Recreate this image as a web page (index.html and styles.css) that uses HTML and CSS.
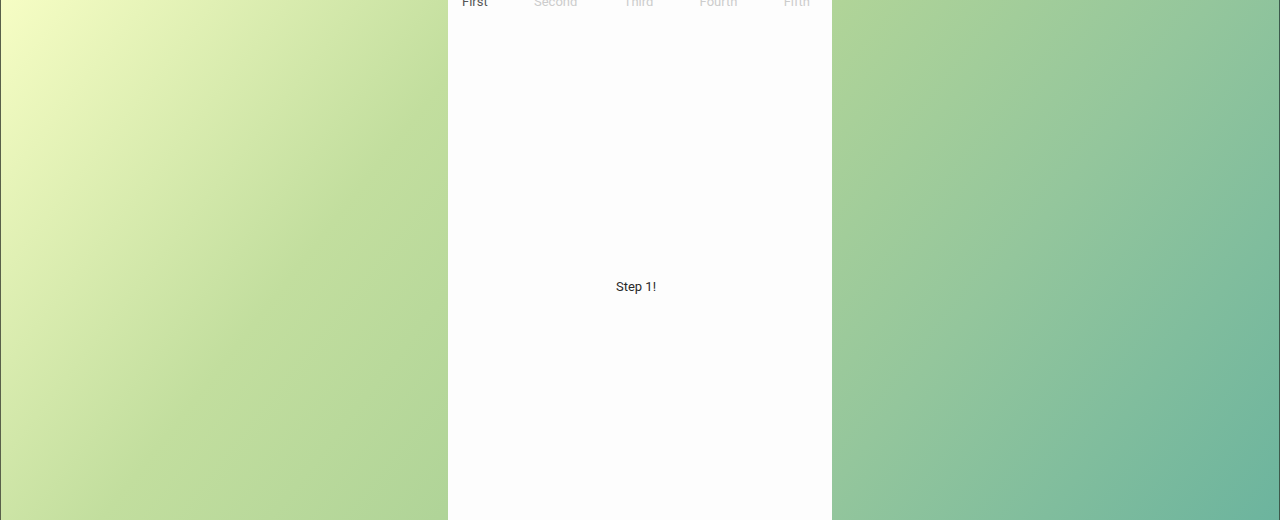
FILE: index.html
```html
<!DOCTYPE html>
<html>
<head>
<meta charset="utf-8">
<link rel="stylesheet" href="styles.css">
</head>
<body>
<div class="page">
  <div class="panel">
    <div class="inner">
      <div class="tabs">
        <span class="tab active">First</span>
        <span class="tab">Second</span>
        <span class="tab">Third</span>
        <span class="tab">Fourth</span>
        <span class="tab">Fifth</span>
      </div>
      <div class="content">Step 1!</div>
    </div>
  </div>
</div>
</body>
</html>
```
FILE: styles.css
```css
html, body {
  margin: 0;
  padding: 0;
  height: 100%;
}
body {
  font-family: Roboto, "Liberation Sans", sans-serif;
  overflow: hidden;
}
.page {
  box-sizing: border-box;
  height: 520px;
  display: flex;
  justify-content: center;
  background: linear-gradient(128deg, #f6fdc4 0%, #c2de9e 30%, #b0d498 50%, #94c69c 72%, #6cb49e 100%);
  border-left: 1px solid #59604a;
  border-right: 1px solid #3c5a4c;
}
.panel {
  width: 384px;
  height: 520px;
  background: #fdfdfd;
  overflow: hidden;
}
.inner {
  width: 376px;
}
.tabs {
  display: flex;
  justify-content: space-between;
  padding: 0 14px;
  margin-top: -6px;
  font-size: 13px;
  line-height: 16px;
  color: #cccccc;
}
.tab.active {
  color: #555555;
}
.content {
  padding-top: 269px;
  text-align: center;
  font-size: 13px;
  line-height: 16px;
  color: #2a2a2a;
}
```
